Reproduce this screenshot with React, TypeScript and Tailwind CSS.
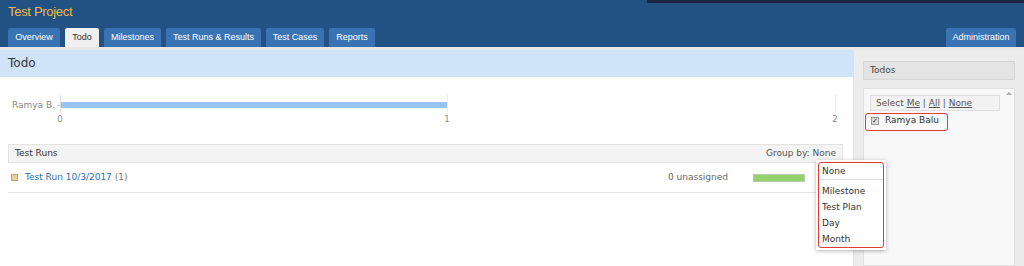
const tabs = [
  { label: 'Overview', w: 'w-[52px]' },
  { label: 'Todo', w: 'w-[34px]' },
  { label: 'Milestones', w: 'w-[57px]' },
  { label: 'Test Runs & Results', w: 'w-[95px]' },
  { label: 'Test Cases', w: 'w-[58px]' },
  { label: 'Reports', w: 'w-[46px]' },
]

function Header() {
  return (
    <div className="relative h-[47px] bg-[#215283] flex flex-col justify-between">
      <div className="absolute right-0 top-0 h-[3px] w-[377px] bg-[#1a2542]" />
      <div className="pl-[8px] pt-[3px] text-[13px] leading-[18px] tracking-[-0.3px] text-[#f2b845] font-['Liberation_Sans',Arial,sans-serif]">
        Test Project
      </div>
      <div className="flex items-end justify-between px-[8px] font-['Liberation_Sans',Arial,sans-serif]">
        <div className="flex gap-[5px]">
          {tabs.map((t) =>
            t.label === 'Todo' ? (
              <div key={t.label} className={`${t.w} h-[19px] text-center leading-[19px] text-[9px] bg-[#f0f0f0] text-[#333] rounded-t-[2px]`}>
                {t.label}
              </div>
            ) : (
              <div key={t.label} className={`${t.w} h-[19px] text-center leading-[19px] text-[9px] bg-[#3a73b3] text-white rounded-t-[2px]`}>
                {t.label}
              </div>
            )
          )}
        </div>
        <div className="w-[70px] h-[19px] text-center leading-[19px] text-[9px] bg-[#3a73b3] text-white rounded-t-[2px]">
          Administration
        </div>
      </div>
    </div>
  )
}

function Chart() {
  return (
    <svg width="853" height="67" className="block font-['DejaVu_Sans',Verdana,sans-serif]">
      <line x1="60.5" y1="18" x2="60.5" y2="36" stroke="#ddd" />
      <line x1="447.5" y1="18" x2="447.5" y2="36" stroke="#eee" />
      <line x1="835.5" y1="18" x2="835.5" y2="36" stroke="#eee" />
      <line x1="57" y1="28.5" x2="60" y2="28.5" stroke="#ccc" />
      <rect x="61" y="25" width="386" height="6" fill="#99c4f2" />
      <text x="55" y="31" textAnchor="end" fontSize="9" fill="#888">Ramya B.</text>
      <text x="60" y="45" textAnchor="middle" fontSize="8.5" fill="#888">0</text>
      <text x="447" y="45" textAnchor="middle" fontSize="8.5" fill="#888">1</text>
      <text x="835" y="45" textAnchor="middle" fontSize="8.5" fill="#888">2</text>
    </svg>
  )
}

function Dropdown() {
  const items = ['Milestone', 'Test Plan', 'Day', 'Month']
  return (
    <div className="absolute z-10 left-[816px] top-[110px] w-[70px] h-[90px] bg-white shadow-[0_1px_4px_rgba(0,0,0,0.3)]">
      <div className="absolute inset-[2px] border-[1.5px] border-[#e53a3a] rounded-[3px]" />
      <div className="pl-[6px] pt-[4px] text-[9px] text-[#333] font-['DejaVu_Sans',Verdana,sans-serif]">
        <div className="h-[15px] leading-[15px]">None</div>
        <div className="h-px bg-[#e2e2e2] -ml-[4px] mr-[2px] mb-[3px]" />
        {items.map((i) => (
          <div key={i} className="h-[16px] leading-[16px]">{i}</div>
        ))}
      </div>
    </div>
  )
}

function Main() {
  return (
    <div className="relative flex-1">
      <div className="h-[27px] bg-[#cfe3f9] pl-[8px] leading-[27px] text-[12px] text-[#333] font-['DejaVu_Sans',Verdana,sans-serif]">
        Todo
      </div>
      <Chart />
      <div className="mx-[8px] w-[835px] font-['DejaVu_Sans',Verdana,sans-serif] text-[9px]">
        <div className="h-[19px] bg-[#f4f4f4] border border-[#e2e2e2] flex items-center justify-between px-[6px] text-[#333]">
          <span>Test Runs</span>
          <span className="text-[#555]">Group by: None</span>
        </div>
        <div className="h-[30px] border-b border-[#e6e6e6] flex items-center">
          <span className="ml-[3px] w-[7px] h-[7px] bg-[#e6d3a0] border border-[#b8a878]" />
          <span className="ml-[7px] text-[#2b6cb5]">Test Run 10/3/2017</span>
          <span className="ml-[3px] text-[#777]">(1)</span>
          <span className="ml-auto text-[#666]">0 unassigned</span>
          <span className="ml-[25px] mr-[38px] w-[52px] h-[8px] bg-[#93d36b] border border-[#b9c9b0]" />
        </div>
      </div>
      <Dropdown />
    </div>
  )
}

function Sidebar() {
  return (
    <div className="w-[171px] bg-[#ececec] border-l border-[#e0e0e0] pl-[9px] pr-[9px] pt-[11px] flex flex-col font-['DejaVu_Sans',Verdana,sans-serif] text-[9px]">
      <div className="h-[19px] bg-[#e4e4e4] border border-[#d6d6d6] pl-[6px] leading-[17px] text-[#444]">Todos</div>
      <div className="relative mt-[8px] flex-1 bg-[#f8f8f8] border border-[#e0e0e0] pl-[6px] pt-[6px]">
        <div className="absolute right-[2px] top-[3px] w-0 h-0 border-x-[3px] border-x-transparent border-b-[3px] border-b-[#aaa]" />
        <div className="w-[130px] h-[16px] bg-[#f2f2f2] border border-[#dedede] pl-[5px] leading-[14px] text-[#555]">
          Select <span className="underline">Me</span> | <span className="underline">All</span> | <span className="underline">None</span>
        </div>
        <div className="relative h-[20px] flex items-center">
          <div className="absolute -left-[5px] top-[2px] w-[83px] h-[18px] border-[1.5px] border-[#e53a3a] rounded-[3px]" />
          <span className="ml-[1px] w-[8px] h-[8px] bg-[#ddd] border border-[#999] text-[7px] leading-[6px] text-[#333] text-center">✓</span>
          <span className="ml-[6px] text-[#333]">Ramya Balu</span>
        </div>
      </div>
    </div>
  )
}

export default function App() {
  return (
    <div className="w-[1024px] h-[266px] overflow-hidden bg-white flex flex-col">
      <Header />
      <div className="h-[3px] bg-[#e8e8e8]" />
      <div className="flex flex-1">
        <Main />
        <Sidebar />
      </div>
    </div>
  )
}
